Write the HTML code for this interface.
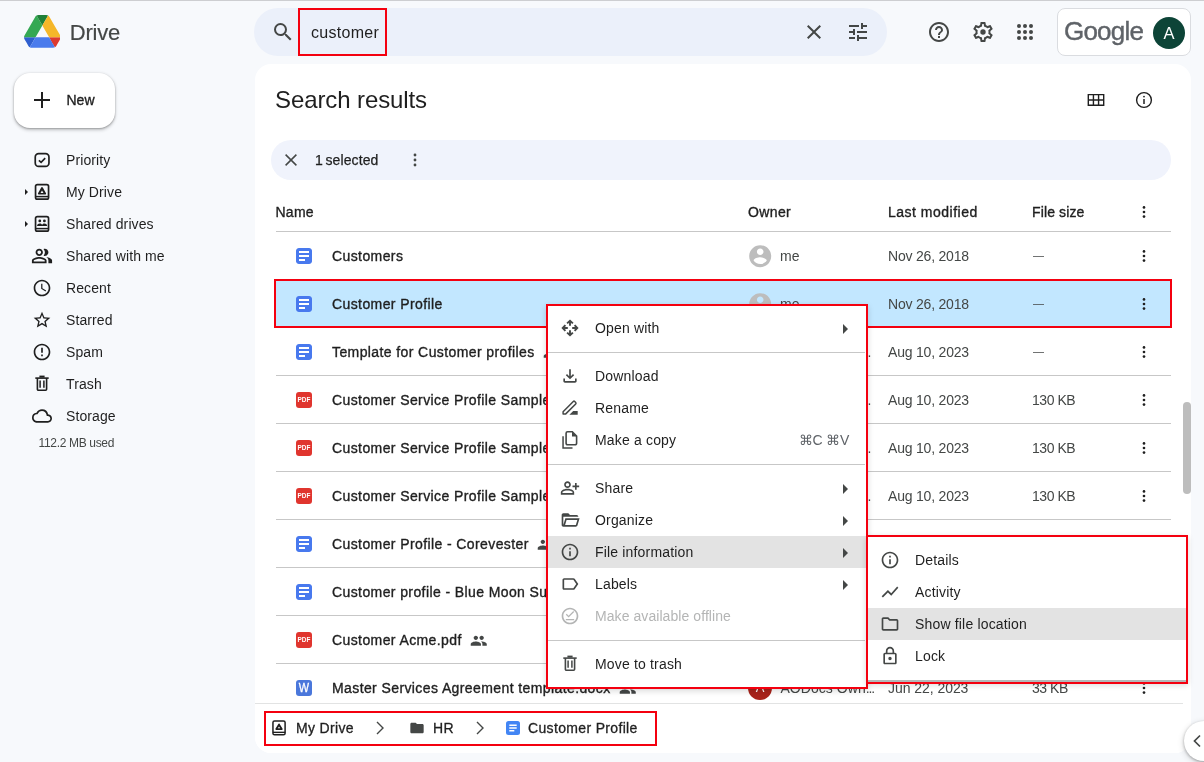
<!DOCTYPE html>
<html lang="en">
<head>
<meta charset="utf-8">
<title>Search results - Google Drive</title>
<style>
*{box-sizing:border-box;margin:0;padding:0}
html,body{width:1204px;height:762px;overflow:hidden}
body{background:#f7f9fc;font-family:"Liberation Sans",Arial,sans-serif;color:#1f1f1f;position:relative;-webkit-font-smoothing:antialiased}
#wrap{position:absolute;left:0;top:0;width:1204px;height:762px;overflow:hidden;will-change:transform}
.abs{position:absolute}
svg{display:block}
.ic{position:absolute;width:24px;height:24px;fill:#444746}
.t{position:absolute;white-space:nowrap;line-height:20px;height:20px}
#topline{left:0;top:0;width:1204px;height:1px;background:#cdced1}
/* header */
#drive{left:69.700px;top:20px;font-size:22px;line-height:26px;height:26px;color:#444746;letter-spacing:-0.2px;-webkit-text-stroke:0.2px #444746}
#search{left:254px;top:8px;width:633px;height:48px;border-radius:24px;background:#ebf0fa}
#q{left:311px;top:23px;font-size:16px;color:#1f1f1f;letter-spacing:0.3px}
.red{position:absolute;border:2px solid #f4000f}
#gbox{left:1057px;top:8px;width:134px;height:47.500px;border-radius:8px;background:#fff;border:1px solid #dadce0}
#glogo{left:1064px;top:14px;font-size:26px;line-height:34px;height:34px;color:#5f6368;letter-spacing:-0.8px;-webkit-text-stroke:0.4px #5f6368}
#avatar{left:1153px;top:16.500px;width:32px;height:32px;border-radius:16px;background:#0d4437;color:#fff;font-size:16.500px;line-height:32px;text-align:center}
/* sidebar */
#new{left:14px;top:72.500px;width:101px;height:55.500px;border-radius:16px;background:#fff;box-shadow:0 1px 2px rgba(0,0,0,.3),0 1.500px 3px 1px rgba(0,0,0,.12)}
#newt{left:66.500px;top:90px;font-size:14px;-webkit-text-stroke:0.35px #1f1f1f;color:#1f1f1f}
.nav{position:absolute;left:66px;font-size:14px;line-height:20px;color:#1f1f1f;white-space:nowrap;letter-spacing:0.1px}
.nic{position:absolute;left:32px;width:20px;height:20px;fill:#1f1f1f}
.tri{position:absolute;left:24.500px;width:0;height:0;border-left:3.800px solid #1f1f1f;border-top:3px solid transparent;border-bottom:3px solid transparent}
#used{left:38.500px;top:433px;font-size:12px;color:#444746;letter-spacing:-0.33px}
/* main */
#main{left:255px;top:64px;width:936px;height:689px;border-radius:16px;background:#fff}
#title{left:275px;top:84px;font-size:24px;line-height:32px;height:32px;color:#1f1f1f;letter-spacing:-0.1px}
#selbar{left:271px;top:140px;width:900px;height:40px;border-radius:20px;background:#f0f3fc}
.h{font-size:14px;color:#1f1f1f;-webkit-text-stroke:0.35px #1f1f1f}
.line{position:absolute;left:276px;width:895px;height:1px;background:#c7c7c7}
.row{position:absolute;left:276px;width:895px;height:48px}
.nm{position:absolute;left:332px;font-size:14px;-webkit-text-stroke:0.35px #1f1f1f;color:#1f1f1f;white-space:nowrap;line-height:20px;letter-spacing:0.4px}
.c{position:absolute;font-size:14px;color:#444746;white-space:nowrap;line-height:20px}
.dash{font-size:11px;left:1033px !important;margin-top:-1px;letter-spacing:0 !important}
.el{letter-spacing:-1.200px}
.fic{position:absolute;left:296px;width:16px;height:16px;border-radius:3px}

#selrow{left:276px;top:280px;width:895px;height:48px;background:#c2e7ff}
.mv{fill:#1f1f1f;width:20px;height:20px}
.pdf{background:#e0352e;color:#fff;font-size:8px;font-weight:bold;line-height:16px;text-align:center}
.pdf span{display:block;transform:scaleX(.8)}
.word{background:#4a77db;color:#fff;font-size:13px;line-height:15.500px;text-align:center;-webkit-text-stroke:0.3px #fff}
.word span{display:block;transform:scaleX(.84)}
.sh{display:inline-block;width:17.500px;height:17.500px;fill:#444746;vertical-align:-4.200px;margin-left:8.500px}
.oav{position:absolute;left:748px;width:24px;height:24px;border-radius:12px;background:#a8231b;color:#fff;font-size:13px;line-height:24px;text-align:center}
.bc{font-size:14px;color:#1f1f1f;-webkit-text-stroke:0.3px #1f1f1f;letter-spacing:0.34px}
/* menus */
.menu{position:absolute;background:#fff;box-shadow:0 2px 6px 2px rgba(0,0,0,.15),0 1px 2px rgba(0,0,0,.3)}
.mi{position:absolute;left:595px;font-size:14px;color:#1f1f1f;white-space:nowrap;line-height:20px;letter-spacing:0.17px}
.mic{position:absolute;left:560px;width:20px;height:20px;fill:#444746}
.msep{position:absolute;left:548px;width:317px;height:1px;background:#c7c7c7}
.arr{position:absolute;left:843px;width:0;height:0;border-left:5px solid #444746;border-top:5px solid transparent;border-bottom:5px solid transparent}
</style>
</head>
<body>
<div id="wrap">
<div class="abs" id="topline"></div>

<!-- HEADER -->
<svg class="abs" style="left:23.700px;top:15px" width="36.700" height="32.800" viewBox="0 0 87.3 78">
<path d="m6.6 66.85 3.85 6.65c.8 1.4 1.95 2.5 3.3 3.3l13.75-23.8h-27.5c0 1.55.4 3.1 1.2 4.5z" fill="#2f5fcf"/>
<path d="m43.65 25-13.75-23.8c-1.35.8-2.5 1.9-3.3 3.3l-25.4 44a9.06 9.06 0 0 0 -1.2 4.5h27.5z" fill="#34a853"/>
<path d="m73.55 76.800c1.350-.8 2.500-1.900 3.300-3.300l1.600-2.750 7.650-13.250c.8-1.400 1.200-2.950 1.200-4.500h-27.502l5.852 11.500z" fill="#dd3a30"/>
<path d="m43.65 25 13.750-23.800c-1.350-.8-2.900-1.200-4.500-1.200h-18.500c-1.600 0-3.150.45-4.500 1.200z" fill="#1f8038"/>
<path d="m59.800 53h-32.300l-13.750 23.800c1.350.8 2.900 1.200 4.500 1.200h50.800c1.600 0 3.150-.45 4.500-1.200z" fill="#4a7bec"/>
<path d="m73.400 26.500-12.700-22c-.8-1.400-1.950-2.500-3.300-3.300l-13.750 23.800 16.150 28h27.450c0-1.550-.4-3.100-1.200-4.500z" fill="#f5b729"/>
</svg>
<div class="t" id="drive">Drive</div>

<div class="abs" id="search"></div>
<svg class="ic" style="left:271px;top:20px" viewBox="0 0 24 24"><path d="M15.5 14h-.79l-.28-.27A6.471 6.471 0 0 0 16 9.500 6.500 6.500 0 1 0 9.500 16c1.610 0 3.090-.59 4.230-1.570l.27.28v.79l5 4.990L20.490 19l-4.990-5zm-6 0C7.010 14 5 11.990 5 9.500S7.010 5 9.500 5 14 7.010 14 9.500 11.990 14 9.500 14z"/></svg>
<div class="t" id="q">customer</div>
<div class="red" style="left:298px;top:8px;width:89px;height:48px"></div>
<svg class="ic" style="left:802px;top:20px" viewBox="0 0 24 24"><path d="M19 6.410L17.590 5 12 10.590 6.410 5 5 6.410 10.590 12 5 17.590 6.410 19 12 13.410 17.590 19 19 17.590 13.410 12z"/></svg>
<svg class="ic" style="left:846px;top:20px" viewBox="0 0 24 24"><path d="M3 17v2h6v-2H3zM3 5v2h10V5H3zm10 16v-2h8v-2h-8v-2h-2v6h2zM7 9v2H3v2h4v2h2V9H7zm14 4v-2H11v2h10zm-6-4h2V7h4V5h-4V3h-2v6z"/></svg>
<svg class="ic" style="left:927px;top:20px" viewBox="0 0 24 24"><path d="M11 18h2v-2h-2v2zm1-16C6.480 2 2 6.480 2 12s4.480 10 10 10 10-4.480 10-10S17.520 2 12 2zm0 18c-4.410 0-8-3.590-8-8s3.590-8 8-8 8 3.590 8 8-3.590 8-8 8zm0-14c-2.210 0-4 1.790-4 4h2c0-1.100.9-2 2-2s2 .9 2 2c0 2-3 1.750-3 5h2c0-2.250 3-2.500 3-5 0-2.210-1.790-4-4-4z"/></svg>
<svg class="ic" style="left:971px;top:20px" viewBox="0 0 24 24"><path d="M19.430 12.980c.04-.32.07-.64.07-.98 0-.34-.03-.66-.07-.98l2.110-1.650c.19-.15.24-.42.12-.64l-2-3.460a.5.5 0 0 0-.61-.22l-2.490 1c-.52-.4-1.080-.73-1.690-.98l-.38-2.650A.488.488 0 0 0 14 2h-4c-.25 0-.46.18-.49.42l-.38 2.650c-.61.25-1.170.59-1.690.98l-2.490-1a.566.566 0 0 0-.18-.03c-.17 0-.34.09-.43.25l-2 3.460c-.13.22-.07.49.12.64l2.110 1.650c-.04.32-.07.65-.07.98 0 .33.03.66.07.98l-2.110 1.650c-.19.15-.24.42-.12.64l2 3.460a.5.5 0 0 0 .61.22l2.490-1c.52.4 1.080.73 1.690.98l.38 2.650c.03.24.24.42.49.42h4c.25 0 .46-.18.49-.42l.38-2.650c.61-.25 1.170-.59 1.690-.98l2.490 1c.06.02.12.03.18.03.17 0 .34-.09.43-.25l2-3.460c.12-.22.07-.49-.12-.64l-2.110-1.650zm-1.980-1.710c.04.31.05.52.05.73 0 .21-.02.43-.05.73l-.14 1.130.89.7 1.080.84-.7 1.210-1.270-.51-1.040-.42-.9.68c-.43.32-.84.56-1.250.73l-1.060.43-.16 1.130-.2 1.350h-1.400l-.19-1.350-.16-1.130-1.060-.43c-.43-.18-.83-.41-1.230-.71l-.91-.7-1.060.43-1.270.51-.7-1.210 1.080-.84.89-.7-.14-1.130c-.03-.31-.05-.54-.05-.74s.02-.43.05-.73l.14-1.130-.89-.7-1.080-.84.7-1.210 1.270.51 1.040.42.9-.68c.43-.32.84-.56 1.250-.73l1.060-.43.16-1.130.2-1.350h1.390l.19 1.350.16 1.130 1.060.43c.43.18.83.41 1.230.71l.91.7 1.060-.43 1.270-.51.7 1.210-1.070.85-.89.7.14 1.130z"/><circle cx="12" cy="12" r="2.700"/></svg>
<svg class="ic" style="left:1013px;top:20px" viewBox="0 0 24 24"><circle cx="6" cy="6" r="2"/><circle cx="12" cy="6" r="2"/><circle cx="18" cy="6" r="2"/><circle cx="6" cy="12" r="2"/><circle cx="12" cy="12" r="2"/><circle cx="18" cy="12" r="2"/><circle cx="6" cy="18" r="2"/><circle cx="12" cy="18" r="2"/><circle cx="18" cy="18" r="2"/></svg>
<div class="abs" id="gbox"></div>
<div class="t" id="glogo">Google</div>
<div class="abs" id="avatar">A</div>

<!-- SIDEBAR -->
<div class="abs" id="new"></div>
<svg class="abs" style="left:30px;top:88px" width="24" height="24" viewBox="0 0 24 24"><path d="M11 4h2v7h7v2h-7v7h-2v-7H4v-2h7z" fill="#1f1f1f"/></svg>
<div class="t" id="newt">New</div>

<!-- NAV -->
<div class="nav" style="top:150px">Priority</div>
<div class="nav" style="top:182px">My Drive</div>
<div class="nav" style="top:214px">Shared drives</div>
<div class="nav" style="top:246px">Shared with me</div>
<div class="nav" style="top:278px">Recent</div>
<div class="nav" style="top:310px">Starred</div>
<div class="nav" style="top:342px">Spam</div>
<div class="nav" style="top:374px">Trash</div>
<div class="nav" style="top:406px">Storage</div>
<div class="t" id="used">112.2 MB used</div>
<div class="tri" style="top:189px"></div>
<div class="tri" style="top:221px"></div>

<!-- MAIN -->
<div class="abs" id="main"></div>
<div class="t" id="title">Search results</div>
<div class="abs" id="selbar"></div>
<!-- sidebar icons -->
<svg class="nic" style="top:150px" viewBox="0 0 20 20"><rect x="3.250" y="3.650" width="13.700" height="12.700" rx="3.400" fill="none" stroke="#1f1f1f" stroke-width="1.700"/><path d="M6.900 10.300l2.200 2.100 4.100-4.300" fill="none" stroke="#1f1f1f" stroke-width="1.600"/></svg>
<svg class="nic" style="top:182px" viewBox="0 0 20 20"><rect x="3.550" y="2.550" width="13" height="14.550" rx="1.700" fill="none" stroke="#1f1f1f" stroke-width="1.700"/><path d="M3.550 14.600h13" stroke="#1f1f1f" stroke-width="1.500"/><path d="M10 6l3.200 5.600H6.800z" fill="#1f1f1f" stroke="#1f1f1f" stroke-width="1.800" stroke-linejoin="round"/><path d="M10 8.400l1.500 2.500h-3z" fill="#f7f9fc"/></svg>
<svg class="nic" style="top:214px" viewBox="0 0 20 20"><rect x="3.550" y="2.550" width="13" height="14.550" rx="1.700" fill="none" stroke="#1f1f1f" stroke-width="1.700"/><path d="M3.550 14.600h13" stroke="#1f1f1f" stroke-width="1.500"/><circle cx="7.800" cy="6.900" r="1.400"/><circle cx="12.400" cy="6.900" r="1.400"/><path d="M5 11.900c0-1.700 1.600-2.500 2.800-2.500s2.300.6 2.300 1.800c0-1.200 1.100-1.800 2.300-1.800s2.800.8 2.800 2.500z"/></svg>
<svg class="nic" style="top:246px;left:31px;width:22px;height:22px;margin-top:-1px" viewBox="0 0 24 24"><path d="M16.670 13.130C18.040 14.060 19 15.320 19 17v3h4v-3c0-2.180-3.570-3.470-6.330-3.870zM15 12c2.210 0 4-1.790 4-4s-1.790-4-4-4c-.47 0-.91.1-1.330.24a5.980 5.980 0 0 1 0 7.520c.42.14.86.24 1.330.24zM9 12c2.210 0 4-1.790 4-4s-1.790-4-4-4-4 1.790-4 4 1.790 4 4 4zm0-6c1.100 0 2 .9 2 2s-.9 2-2 2-2-.9-2-2 .9-2 2-2zm0 7c-2.670 0-8 1.340-8 4v3h16v-3c0-2.660-5.330-4-8-4zm6 5H3v-.99C3.200 16.290 6.300 15 9 15s5.800 1.290 6 2v1z"/></svg>
<svg class="nic" style="top:278px" viewBox="0 0 24 24"><path d="M11.990 2C6.470 2 2 6.480 2 12s4.470 10 9.990 10C17.520 22 22 17.520 22 12S17.520 2 11.990 2zM12 20c-4.420 0-8-3.580-8-8s3.580-8 8-8 8 3.580 8 8-3.580 8-8 8zm.5-13H11v6l5.250 3.150.75-1.230-4.500-2.670z"/></svg>
<svg class="nic" style="top:310px" viewBox="0 0 24 24"><path d="M22 9.240l-7.190-.62L12 2 9.190 8.630 2 9.240l5.460 4.730L5.820 21 12 17.270 18.180 21l-1.630-7.030L22 9.240zM12 15.400l-3.760 2.270 1-4.280-3.320-2.880 4.380-.38L12 6.100l1.710 4.040 4.380.38-3.320 2.880 1 4.280L12 15.400z"/></svg>
<svg class="nic" style="top:342px" viewBox="0 0 24 24"><path d="M11 15h2v2h-2zm0-8h2v6h-2zm.99-5C6.470 2 2 6.480 2 12s4.470 10 9.990 10C17.520 22 22 17.520 22 12S17.520 2 11.990 2zM12 20c-4.420 0-8-3.580-8-8s3.580-8 8-8 8 3.580 8 8-3.580 8-8 8z"/></svg>
<svg class="nic" style="top:374px;color:#1f1f1f" viewBox="0 0 20 20"><path d="M3.300 4.100h13.400" fill="none" stroke="currentColor" stroke-width="1.600"/><path d="M7.400 1.600h5.200v2H7.400z"/><path d="M5.400 4.100V15.200a1 1 0 0 0 1 1h7.200a1 1 0 0 0 1-1V4.100" fill="none" stroke="currentColor" stroke-width="1.600"/><path d="M8.100 6.500v7.300M11.900 6.500v7.300" fill="none" stroke="currentColor" stroke-width="1.500"/></svg>
<svg class="nic" style="top:406px;left:32px;width:20px;height:20px" viewBox="0 0 24 24"><path d="M19.350 10.040A7.490 7.490 0 0 0 12 4C9.110 4 6.600 5.640 5.350 8.040A5.994 5.994 0 0 0 0 14c0 3.310 2.690 6 6 6h13c2.760 0 5-2.240 5-5 0-2.640-2.050-4.780-4.650-4.960zM19 18H6c-2.210 0-4-1.790-4-4 0-2.050 1.530-3.760 3.560-3.970l1.070-.11.5-.95A5.469 5.469 0 0 1 12 6c2.620 0 4.880 1.860 5.390 4.430l.3 1.500 1.530.11A2.980 2.980 0 0 1 22 15c0 1.650-1.350 3-3 3z"/></svg>

<!-- selection bar content -->
<svg class="abs" style="left:281px;top:150px" width="20" height="20" viewBox="0 0 20 20"><path d="M4.600 4.600l10.800 10.800M15.400 4.600L4.600 15.400" fill="none" stroke="#444746" stroke-width="1.500"/></svg>
<div class="t" style="left:315px;top:150px;font-size:14px;color:#1f1f1f;-webkit-text-stroke:0.25px #1f1f1f;letter-spacing:0.12px;word-spacing:-1.500px">1 selected</div>
<svg class="abs" style="left:405px;top:150px" width="20" height="20" viewBox="0 0 24 24"><circle cx="12" cy="6" r="1.700" fill="#444746"/><circle cx="12" cy="12" r="1.700" fill="#444746"/><circle cx="12" cy="18" r="1.700" fill="#444746"/></svg>

<!-- title icons -->
<svg class="abs" style="left:1086px;top:90px" width="20" height="20" viewBox="0 0 20 20"><path d="M2.300 4.600h15.400v10.700H2.300zM7.430 4.600v10.700M12.570 4.600v10.700M2.300 9.950h15.400" fill="none" stroke="#1f1f1f" stroke-width="1.400"/></svg>
<svg class="abs" style="left:1134px;top:90px" width="20" height="20" viewBox="0 0 20 20"><circle cx="10" cy="10" r="7.400" fill="none" stroke="#1f1f1f" stroke-width="1.400"/><path d="M10 9v5" stroke="#1f1f1f" stroke-width="1.500"/><circle cx="10" cy="6.600" r="0.900" fill="#1f1f1f"/></svg>
<!--ROWS-START-->
<!-- TABLE -->
<div class="t h" style="left:275.500px;top:202px;letter-spacing:0.25px">Name</div>
<div class="t h" style="left:748px;top:202px;letter-spacing:0.37px">Owner</div>
<div class="t h" style="left:888px;top:202px;letter-spacing:0.5px">Last modified</div>
<div class="t h" style="left:1032px;top:202px;letter-spacing:0.12px">File size</div>
<svg class="ic mv" style="left:1134px;top:202px" viewBox="0 0 24 24"><circle cx="12" cy="6.500" r="1.600"/><circle cx="12" cy="12" r="1.600"/><circle cx="12" cy="17.500" r="1.600"/></svg>
<div class="line" style="top:231px"></div>
<div class="abs" id="selrow"></div>
<!-- row 0 -->
<svg class="fic" style="top:248px" viewBox="0 0 16 16"><rect width="16" height="16" rx="2" fill="#4879ee"/><path d="M3 3h10v2H3zM3 7h10v2H3zM3 11h6v2H3z" fill="#fff"/></svg>
<div class="nm" style="top:246px">Customers<svg class="sh" viewBox="0 0 24 24" style="visibility:hidden"><path d="M16 11c1.660 0 2.990-1.340 2.990-3S17.660 5 16 5c-1.660 0-3 1.340-3 3s1.340 3 3 3zm-8 0c1.660 0 2.990-1.340 2.990-3S9.660 5 8 5C6.340 5 5 6.340 5 8s1.340 3 3 3zm0 2c-2.330 0-7 1.170-7 3.500V19h14v-2.500c0-2.330-4.670-3.500-7-3.500zm8 0c-.29 0-.62.02-.97.05 1.160.84 1.970 1.970 1.970 3.450V19h6v-2.500c0-2.330-4.670-3.500-7-3.500z"/></svg></div>
<svg class="abs" style="left:746.800px;top:242.8px" width="26.400" height="26.400" viewBox="0 0 24 24"><path fill="#bdbdbd" d="M12 2C6.480 2 2 6.480 2 12s4.480 10 10 10 10-4.480 10-10S17.520 2 12 2zm0 3c1.660 0 3 1.340 3 3s-1.340 3-3 3-3-1.340-3-3 1.340-3 3-3zm0 14.200c-2.500 0-4.710-1.280-6-3.220.03-1.990 4-3.080 6-3.080 1.990 0 5.970 1.090 6 3.080-1.290 1.940-3.500 3.220-6 3.220z"/></svg>
<div class="c" style="left:780px;top:246px">me</div>
<div class="c" style="left:888px;top:246px;letter-spacing:-0.2px">Nov 26, 2018</div>
<div class="c dash" style="left:1032px;top:246px;letter-spacing:-0.45px">—</div>
<svg class="ic mv" style="left:1134px;top:246px" viewBox="0 0 24 24"><circle cx="12" cy="6.500" r="1.600"/><circle cx="12" cy="12" r="1.600"/><circle cx="12" cy="17.500" r="1.600"/></svg>
<div class="line" style="top:279px"></div>
<!-- row 1 -->
<svg class="fic" style="top:296px" viewBox="0 0 16 16"><rect width="16" height="16" rx="2" fill="#4879ee"/><path d="M3 3h10v2H3zM3 7h10v2H3zM3 11h6v2H3z" fill="#fff"/></svg>
<div class="nm" style="top:294px">Customer Profile<svg class="sh" viewBox="0 0 24 24" style="visibility:hidden"><path d="M16 11c1.660 0 2.990-1.340 2.990-3S17.660 5 16 5c-1.660 0-3 1.340-3 3s1.340 3 3 3zm-8 0c1.660 0 2.990-1.340 2.990-3S9.660 5 8 5C6.340 5 5 6.340 5 8s1.340 3 3 3zm0 2c-2.330 0-7 1.170-7 3.500V19h14v-2.500c0-2.330-4.670-3.500-7-3.500zm8 0c-.29 0-.62.02-.97.05 1.160.84 1.970 1.970 1.970 3.450V19h6v-2.500c0-2.330-4.670-3.500-7-3.500z"/></svg></div>
<svg class="abs" style="left:746.800px;top:290.8px" width="26.400" height="26.400" viewBox="0 0 24 24"><path fill="#bdbdbd" d="M12 2C6.480 2 2 6.480 2 12s4.480 10 10 10 10-4.480 10-10S17.520 2 12 2zm0 3c1.660 0 3 1.340 3 3s-1.340 3-3 3-3-1.340-3-3 1.340-3 3-3zm0 14.200c-2.500 0-4.710-1.280-6-3.220.03-1.990 4-3.080 6-3.080 1.990 0 5.970 1.090 6 3.080-1.290 1.940-3.500 3.220-6 3.220z"/></svg>
<div class="c" style="left:780px;top:294px">me</div>
<div class="c" style="left:888px;top:294px;letter-spacing:-0.2px">Nov 26, 2018</div>
<div class="c dash" style="left:1032px;top:294px;letter-spacing:-0.45px">—</div>
<svg class="ic mv" style="left:1134px;top:294px" viewBox="0 0 24 24"><circle cx="12" cy="6.500" r="1.600"/><circle cx="12" cy="12" r="1.600"/><circle cx="12" cy="17.500" r="1.600"/></svg>
<!-- row 2 -->
<svg class="fic" style="top:344px" viewBox="0 0 16 16"><rect width="16" height="16" rx="2" fill="#4879ee"/><path d="M3 3h10v2H3zM3 7h10v2H3zM3 11h6v2H3z" fill="#fff"/></svg>
<div class="nm" style="top:342px">Template for Customer profiles<svg class="sh" viewBox="0 0 24 24" style="visibility:visible"><path d="M16 11c1.660 0 2.990-1.340 2.990-3S17.660 5 16 5c-1.660 0-3 1.340-3 3s1.340 3 3 3zm-8 0c1.660 0 2.990-1.340 2.990-3S9.660 5 8 5C6.340 5 5 6.340 5 8s1.340 3 3 3zm0 2c-2.330 0-7 1.170-7 3.500V19h14v-2.500c0-2.330-4.670-3.500-7-3.500zm8 0c-.29 0-.62.02-.97.05 1.160.84 1.970 1.970 1.970 3.450V19h6v-2.500c0-2.330-4.670-3.500-7-3.500z"/></svg></div>
<div class="oav" style="top:340px">A</div>
<div class="c" style="left:776.6px;top:342px;letter-spacing:0.06px">AODocs Own<span class="el">...</span></div>
<div class="c" style="left:888px;top:342px;letter-spacing:-0.2px">Aug 10, 2023</div>
<div class="c dash" style="left:1032px;top:342px;letter-spacing:-0.45px">—</div>
<svg class="ic mv" style="left:1134px;top:342px" viewBox="0 0 24 24"><circle cx="12" cy="6.500" r="1.600"/><circle cx="12" cy="12" r="1.600"/><circle cx="12" cy="17.500" r="1.600"/></svg>
<div class="line" style="top:375px"></div>
<!-- row 3 -->
<div class="fic pdf" style="top:392px"><span>PDF</span></div>
<div class="nm" style="top:390px">Customer Service Profile Sample.pdf<svg class="sh" viewBox="0 0 24 24" style="visibility:hidden"><path d="M16 11c1.660 0 2.990-1.340 2.990-3S17.660 5 16 5c-1.660 0-3 1.340-3 3s1.340 3 3 3zm-8 0c1.660 0 2.990-1.340 2.990-3S9.660 5 8 5C6.340 5 5 6.340 5 8s1.340 3 3 3zm0 2c-2.330 0-7 1.170-7 3.500V19h14v-2.500c0-2.330-4.670-3.500-7-3.500zm8 0c-.29 0-.62.02-.97.05 1.160.84 1.970 1.970 1.970 3.450V19h6v-2.500c0-2.330-4.670-3.500-7-3.500z"/></svg></div>
<div class="oav" style="top:388px">A</div>
<div class="c" style="left:776.6px;top:390px;letter-spacing:0.06px">AODocs Own<span class="el">...</span></div>
<div class="c" style="left:888px;top:390px;letter-spacing:-0.2px">Aug 10, 2023</div>
<div class="c" style="left:1032px;top:390px;letter-spacing:-0.45px">130 KB</div>
<svg class="ic mv" style="left:1134px;top:390px" viewBox="0 0 24 24"><circle cx="12" cy="6.500" r="1.600"/><circle cx="12" cy="12" r="1.600"/><circle cx="12" cy="17.500" r="1.600"/></svg>
<div class="line" style="top:423px"></div>
<!-- row 4 -->
<div class="fic pdf" style="top:440px"><span>PDF</span></div>
<div class="nm" style="top:438px">Customer Service Profile Sample.pdf<svg class="sh" viewBox="0 0 24 24" style="visibility:hidden"><path d="M16 11c1.660 0 2.990-1.340 2.990-3S17.660 5 16 5c-1.660 0-3 1.340-3 3s1.340 3 3 3zm-8 0c1.660 0 2.990-1.340 2.990-3S9.660 5 8 5C6.340 5 5 6.340 5 8s1.340 3 3 3zm0 2c-2.330 0-7 1.170-7 3.500V19h14v-2.500c0-2.330-4.670-3.500-7-3.500zm8 0c-.29 0-.62.02-.97.05 1.160.84 1.970 1.970 1.970 3.450V19h6v-2.500c0-2.330-4.670-3.500-7-3.500z"/></svg></div>
<div class="oav" style="top:436px">A</div>
<div class="c" style="left:776.6px;top:438px;letter-spacing:0.06px">AODocs Own<span class="el">...</span></div>
<div class="c" style="left:888px;top:438px;letter-spacing:-0.2px">Aug 10, 2023</div>
<div class="c" style="left:1032px;top:438px;letter-spacing:-0.45px">130 KB</div>
<svg class="ic mv" style="left:1134px;top:438px" viewBox="0 0 24 24"><circle cx="12" cy="6.500" r="1.600"/><circle cx="12" cy="12" r="1.600"/><circle cx="12" cy="17.500" r="1.600"/></svg>
<div class="line" style="top:471px"></div>
<!-- row 5 -->
<div class="fic pdf" style="top:488px"><span>PDF</span></div>
<div class="nm" style="top:486px">Customer Service Profile Sample.pdf<svg class="sh" viewBox="0 0 24 24" style="visibility:hidden"><path d="M16 11c1.660 0 2.990-1.340 2.990-3S17.660 5 16 5c-1.660 0-3 1.340-3 3s1.340 3 3 3zm-8 0c1.660 0 2.990-1.340 2.990-3S9.660 5 8 5C6.340 5 5 6.340 5 8s1.340 3 3 3zm0 2c-2.330 0-7 1.170-7 3.500V19h14v-2.500c0-2.330-4.670-3.500-7-3.500zm8 0c-.29 0-.62.02-.97.05 1.160.84 1.970 1.970 1.970 3.450V19h6v-2.500c0-2.330-4.670-3.500-7-3.500z"/></svg></div>
<div class="oav" style="top:484px">A</div>
<div class="c" style="left:776.6px;top:486px;letter-spacing:0.06px">AODocs Own<span class="el">...</span></div>
<div class="c" style="left:888px;top:486px;letter-spacing:-0.2px">Aug 10, 2023</div>
<div class="c" style="left:1032px;top:486px;letter-spacing:-0.45px">130 KB</div>
<svg class="ic mv" style="left:1134px;top:486px" viewBox="0 0 24 24"><circle cx="12" cy="6.500" r="1.600"/><circle cx="12" cy="12" r="1.600"/><circle cx="12" cy="17.500" r="1.600"/></svg>
<div class="line" style="top:519px"></div>
<!-- row 6 -->
<svg class="fic" style="top:536px" viewBox="0 0 16 16"><rect width="16" height="16" rx="2" fill="#4879ee"/><path d="M3 3h10v2H3zM3 7h10v2H3zM3 11h6v2H3z" fill="#fff"/></svg>
<div class="nm" style="top:534px">Customer Profile - Corevester<svg class="sh" viewBox="0 0 24 24" style="visibility:visible"><path d="M16 11c1.660 0 2.990-1.340 2.990-3S17.660 5 16 5c-1.660 0-3 1.340-3 3s1.340 3 3 3zm-8 0c1.660 0 2.990-1.340 2.990-3S9.660 5 8 5C6.340 5 5 6.340 5 8s1.340 3 3 3zm0 2c-2.330 0-7 1.170-7 3.500V19h14v-2.500c0-2.330-4.670-3.500-7-3.500zm8 0c-.29 0-.62.02-.97.05 1.160.84 1.970 1.970 1.970 3.450V19h6v-2.500c0-2.330-4.670-3.500-7-3.500z"/></svg></div>
<svg class="abs" style="left:746.800px;top:530.8px" width="26.400" height="26.400" viewBox="0 0 24 24"><path fill="#bdbdbd" d="M12 2C6.480 2 2 6.480 2 12s4.480 10 10 10 10-4.480 10-10S17.520 2 12 2zm0 3c1.660 0 3 1.340 3 3s-1.340 3-3 3-3-1.340-3-3 1.340-3 3-3zm0 14.200c-2.500 0-4.710-1.280-6-3.220.03-1.990 4-3.080 6-3.080 1.990 0 5.970 1.090 6 3.080-1.290 1.940-3.500 3.220-6 3.220z"/></svg>
<div class="c" style="left:780px;top:534px">me</div>
<div class="c" style="left:888px;top:534px;letter-spacing:-0.2px">Aug 9, 2023</div>
<div class="c dash" style="left:1032px;top:534px;letter-spacing:-0.45px">—</div>
<svg class="ic mv" style="left:1134px;top:534px" viewBox="0 0 24 24"><circle cx="12" cy="6.500" r="1.600"/><circle cx="12" cy="12" r="1.600"/><circle cx="12" cy="17.500" r="1.600"/></svg>
<div class="line" style="top:567px"></div>
<!-- row 7 -->
<svg class="fic" style="top:584px" viewBox="0 0 16 16"><rect width="16" height="16" rx="2" fill="#4879ee"/><path d="M3 3h10v2H3zM3 7h10v2H3zM3 11h6v2H3z" fill="#fff"/></svg>
<div class="nm" style="top:582px">Customer profile - Blue Moon Supplies<svg class="sh" viewBox="0 0 24 24" style="visibility:visible"><path d="M16 11c1.660 0 2.990-1.340 2.990-3S17.660 5 16 5c-1.660 0-3 1.340-3 3s1.340 3 3 3zm-8 0c1.660 0 2.990-1.340 2.990-3S9.660 5 8 5C6.340 5 5 6.340 5 8s1.340 3 3 3zm0 2c-2.330 0-7 1.170-7 3.500V19h14v-2.500c0-2.330-4.670-3.500-7-3.500zm8 0c-.29 0-.62.02-.97.05 1.160.84 1.970 1.970 1.970 3.450V19h6v-2.500c0-2.330-4.670-3.500-7-3.500z"/></svg></div>
<svg class="abs" style="left:746.800px;top:578.8px" width="26.400" height="26.400" viewBox="0 0 24 24"><path fill="#bdbdbd" d="M12 2C6.480 2 2 6.480 2 12s4.480 10 10 10 10-4.480 10-10S17.520 2 12 2zm0 3c1.660 0 3 1.340 3 3s-1.340 3-3 3-3-1.340-3-3 1.340-3 3-3zm0 14.200c-2.500 0-4.710-1.280-6-3.220.03-1.990 4-3.080 6-3.080 1.990 0 5.970 1.090 6 3.080-1.290 1.940-3.500 3.220-6 3.220z"/></svg>
<div class="c" style="left:780px;top:582px">me</div>
<div class="c" style="left:888px;top:582px;letter-spacing:-0.2px">Aug 9, 2023</div>
<div class="c dash" style="left:1032px;top:582px;letter-spacing:-0.45px">—</div>
<svg class="ic mv" style="left:1134px;top:582px" viewBox="0 0 24 24"><circle cx="12" cy="6.500" r="1.600"/><circle cx="12" cy="12" r="1.600"/><circle cx="12" cy="17.500" r="1.600"/></svg>
<div class="line" style="top:615px"></div>
<!-- row 8 -->
<div class="fic pdf" style="top:632px"><span>PDF</span></div>
<div class="nm" style="top:630px">Customer Acme.pdf<svg class="sh" viewBox="0 0 24 24" style="visibility:visible"><path d="M16 11c1.660 0 2.990-1.340 2.990-3S17.660 5 16 5c-1.660 0-3 1.340-3 3s1.340 3 3 3zm-8 0c1.660 0 2.990-1.340 2.990-3S9.660 5 8 5C6.340 5 5 6.340 5 8s1.340 3 3 3zm0 2c-2.330 0-7 1.170-7 3.500V19h14v-2.500c0-2.330-4.670-3.500-7-3.500zm8 0c-.29 0-.62.02-.97.05 1.160.84 1.970 1.970 1.970 3.450V19h6v-2.500c0-2.330-4.670-3.500-7-3.500z"/></svg></div>
<svg class="abs" style="left:746.800px;top:626.8px" width="26.400" height="26.400" viewBox="0 0 24 24"><path fill="#bdbdbd" d="M12 2C6.480 2 2 6.480 2 12s4.480 10 10 10 10-4.480 10-10S17.520 2 12 2zm0 3c1.660 0 3 1.340 3 3s-1.340 3-3 3-3-1.340-3-3 1.340-3 3-3zm0 14.200c-2.500 0-4.710-1.280-6-3.220.03-1.990 4-3.080 6-3.080 1.990 0 5.970 1.090 6 3.080-1.290 1.940-3.500 3.220-6 3.220z"/></svg>
<div class="c" style="left:780px;top:630px">me</div>
<div class="c" style="left:888px;top:630px;letter-spacing:-0.2px">Jul 5, 2023</div>
<div class="c" style="left:1032px;top:630px;letter-spacing:-0.45px">97 KB</div>
<svg class="ic mv" style="left:1134px;top:630px" viewBox="0 0 24 24"><circle cx="12" cy="6.500" r="1.600"/><circle cx="12" cy="12" r="1.600"/><circle cx="12" cy="17.500" r="1.600"/></svg>
<div class="line" style="top:663px"></div>
<!-- row 9 -->
<div class="fic word" style="top:680px"><span>W</span></div>
<div class="nm" style="top:678px">Master Services Agreement template.docx<svg class="sh" viewBox="0 0 24 24" style="visibility:visible"><path d="M16 11c1.660 0 2.990-1.340 2.990-3S17.660 5 16 5c-1.660 0-3 1.340-3 3s1.340 3 3 3zm-8 0c1.660 0 2.990-1.340 2.990-3S9.660 5 8 5C6.340 5 5 6.340 5 8s1.340 3 3 3zm0 2c-2.330 0-7 1.170-7 3.500V19h14v-2.500c0-2.330-4.670-3.500-7-3.500zm8 0c-.29 0-.62.02-.97.05 1.160.84 1.970 1.970 1.970 3.450V19h6v-2.500c0-2.330-4.670-3.500-7-3.500z"/></svg></div>
<div class="oav" style="top:676px">A</div>
<div class="c" style="left:780.4px;top:678px;letter-spacing:0.06px">AODocs Own<span class="el">...</span></div>
<div class="c" style="left:888px;top:678px;letter-spacing:-0.05px">Jun 22, 2023</div>
<div class="c" style="left:1032px;top:678px;letter-spacing:-0.45px">33 KB</div>
<svg class="ic mv" style="left:1134px;top:678px" viewBox="0 0 24 24"><circle cx="12" cy="6.500" r="1.600"/><circle cx="12" cy="12" r="1.600"/><circle cx="12" cy="17.500" r="1.600"/></svg>
<div class="line" style="top:711px"></div>
<!--ROWS-END-->
<!--MENUS-START-->
<!-- row selection red box -->
<div class="red" style="left:274px;top:279px;width:898px;height:49px"></div>

<!-- BOTTOM BAR -->
<div class="abs" style="left:255px;top:704px;width:936px;height:49px;background:#fff;border-radius:0 0 16px 16px"></div>
<div class="abs" style="left:255px;top:703px;width:928px;height:1px;background:#e2e3e3"></div>
<svg class="abs" style="left:271px;top:720px" width="16" height="16" viewBox="0 0 16 16"><rect x="1.950" y="0.950" width="12.150" height="13.800" rx="1.600" fill="none" stroke="#1f1f1f" stroke-width="1.500"/><path d="M1.950 12.350h12.150" stroke="#1f1f1f" stroke-width="1.400"/><path d="M8 4.300l2.900 4.800H5.100z" fill="#1f1f1f" stroke="#1f1f1f" stroke-width="1.600" stroke-linejoin="round"/><path d="M8 6.400l1.200 1.900H6.800z" fill="#fff"/></svg>
<div class="t bc" style="left:296px;top:718px">My Drive</div>
<svg class="abs" style="left:374px;top:720px" width="12" height="16" viewBox="0 0 12 16"><path d="M3 2l6 6-6 6" fill="none" stroke="#444746" stroke-width="1.400"/></svg>
<svg class="abs" style="left:409px;top:720px" width="16" height="16" viewBox="0 0 24 24"><path d="M10 4H4c-1.100 0-1.990.9-1.990 2L2 18c0 1.100.9 2 2 2h16c1.100 0 2-.9 2-2V8c0-1.100-.9-2-2-2h-8l-2-2z" fill="#444746"/></svg>
<div class="t bc" style="left:433px;top:718px">HR</div>
<svg class="abs" style="left:474px;top:720px" width="12" height="16" viewBox="0 0 12 16"><path d="M3 2l6 6-6 6" fill="none" stroke="#444746" stroke-width="1.400"/></svg>
<svg class="abs" style="left:505px;top:720px" width="16" height="16" viewBox="0 0 16 16"><rect x="1" y="1" width="14" height="14" rx="2.500" fill="#4285f4"/><path d="M4.300 4.500h7.400v1.400H4.300zM4.300 7.300h7.400v1.400H4.300zM4.300 10.100h5v1.400h-5z" fill="#fff"/></svg>
<div class="t bc" style="left:528px;top:718px">Customer Profile</div>
<div class="red" style="left:264px;top:711px;width:393px;height:35px"></div>

<!-- scrollbar + side toggle -->
<div class="abs" style="left:1183px;top:402px;width:8px;height:92px;border-radius:4px;background:#bdbdbd"></div>
<div class="abs" style="left:1184px;top:721px;width:40px;height:40px;border-radius:20px;background:#fff;box-shadow:0 1px 3px rgba(0,0,0,.3),0 2px 6px 1px rgba(0,0,0,.12)"></div>
<svg class="abs" style="left:1191px;top:733px" width="12" height="16" viewBox="0 0 12 16"><path d="M9 2.500L3.500 8 9 13.500" fill="none" stroke="#444746" stroke-width="1.700"/></svg>

<!-- CONTEXT MENU -->
<div class="menu" style="left:548px;top:306px;width:318px;height:381px"></div>
<div class="abs" style="left:548px;top:536px;width:318px;height:32px;background:#e3e3e3"></div>
<div class="msep" style="top:352px"></div>
<div class="msep" style="top:464px"></div>
<div class="msep" style="top:640px"></div>
<div class="mi" style="top:318px">Open with</div>
<div class="mi" style="top:366px">Download</div>
<div class="mi" style="top:398px">Rename</div>
<div class="mi" style="top:430px">Make a copy</div>
<div class="mi" style="top:478px">Share</div>
<div class="mi" style="top:510px">Organize</div>
<div class="mi" style="top:542px">File information</div>
<div class="mi" style="top:574px">Labels</div>
<div class="mi" style="top:606px;color:#b4b5b5;letter-spacing:0.07px">Make available offline</div>
<div class="mi" style="top:654px">Move to trash</div>
<div class="mi sc" style="top:430px;left:798.500px;color:#5f6368;letter-spacing:-0.1px">⌘C ⌘V</div>
<div class="arr" style="top:323.8px"></div>
<div class="arr" style="top:483.8px"></div>
<div class="arr" style="top:515.8px"></div>
<div class="arr" style="top:547.8px"></div>
<div class="arr" style="top:579.8px"></div>
<!-- menu icons -->
<svg class="mic" style="top:318px" viewBox="0 0 20 20"><path d="M7.100 5.400L10 2.700l2.900 2.700M10 3.200v4.600M7.100 14.600L10 17.300l2.900-2.700M10 16.800v-4.600M5.400 7.100L2.700 10l2.700 2.900M3.200 10h4.600M14.600 7.100L17.300 10l-2.700 2.900M16.800 10h-4.600" fill="none" stroke="#444746" stroke-width="1.900"/></svg>
<svg class="mic" style="top:366px" viewBox="0 0 24 24"><path d="M18 15v3H6v-3H4v3c0 1.100.9 2 2 2h12c1.100 0 2-.9 2-2v-3h-2zm-1-4l-1.410-1.410L13 12.170V4h-2v8.170L8.410 9.590 7 11l5 5 5-5z"/></svg>
<svg class="mic" style="top:398px" viewBox="0 0 20 20"><path d="M3.100 16V13.700L13.300 3.500a1 1 0 0 1 1.400 0l1 1a1 1 0 0 1 0 1.400L5.500 16.100z" fill="none" stroke="#444746" stroke-width="1.500" stroke-linejoin="round"/><path d="M13.200 12.900h4.500v3.800H9.400z"/></svg>
<svg class="mic" style="top:430px" viewBox="0 0 20 20"><path d="M7.600 1.800h4.700l4.300 4.400v7.100a1.500 1.500 0 0 1-1.500 1.500H7.600a1.500 1.500 0 0 1-1.500-1.500V3.300a1.500 1.500 0 0 1 1.500-1.500z" fill="none" stroke="#444746" stroke-width="1.600"/><path d="M12 1.800l4.600 4.700H12z"/><path d="M3.050 6.200V17.950H12.500" fill="none" stroke="#444746" stroke-width="1.500"/></svg>
<svg class="mic" style="top:478px" viewBox="0 0 24 24"><path d="M20 9V6h-2v3h-3v2h3v3h2v-3h3V9h-3zM9 12c2.210 0 4-1.790 4-4s-1.790-4-4-4-4 1.790-4 4 1.790 4 4 4zm0-6c1.100 0 2 .9 2 2s-.9 2-2 2-2-.9-2-2 .9-2 2-2zm6.390 8.560C13.710 13.700 11.530 13 9 13s-4.710.7-6.390 1.560A2.970 2.970 0 0 0 1 17.220V20h16v-2.780c0-1.120-.61-2.150-1.610-2.660zM15 18H3v-.78c0-.38.2-.72.52-.88C4.710 15.730 6.630 15 9 15c2.370 0 4.290.73 5.480 1.340.32.16.52.5.52.880V18z"/></svg>
<svg class="mic" style="top:510px" viewBox="0 0 24 24"><path d="M4 20c-1.100 0-2-.9-2-2V6c0-1.100.9-2 2-2h6l2 2h8c1.100 0 2 .9 2 2H4v10l2.400-8h17.100l-2.580 8.590c-.25.840-1.030 1.410-1.910 1.410H4zm2.100-2h12.900l1.800-6H7.900l-1.800 6z"/></svg>
<svg class="mic" style="top:542px" viewBox="0 0 24 24"><path d="M11 7h2v2h-2zm0 4h2v6h-2zm1-9C6.480 2 2 6.480 2 12s4.480 10 10 10 10-4.480 10-10S17.520 2 12 2zm0 18c-4.410 0-8-3.590-8-8s3.590-8 8-8 8 3.590 8 8-3.590 8-8 8z"/></svg>
<svg class="mic" style="top:574px" viewBox="0 0 24 24"><path d="M17.630 5.840C17.270 5.330 16.670 5 16 5L5 5.010C3.900 5.010 3 5.900 3 7v10c0 1.100.9 1.990 2 1.990L16 19c.67 0 1.270-.33 1.630-.84L22 12l-4.370-6.160zM16 17H5V7h11l3.550 5L16 17z"/></svg>
<svg class="mic" style="top:606px;fill:#b4b5b5" viewBox="0 0 24 24"><path d="M12 2C6.480 2 2 6.480 2 12s4.480 10 10 10 10-4.480 10-10S17.520 2 12 2zm0 18c-4.410 0-8-3.590-8-8s3.590-8 8-8 8 3.590 8 8-3.590 8-8 8z"/><path d="M7 15.500h10V17H7zM10.300 13.800L7 10.500l1.100-1.100 2.200 2.200 5.600-5.600L17 7.100z"/></svg>
<svg class="mic" style="top:654px;color:#444746" viewBox="0 0 20 20"><path d="M3.300 4.100h13.400" fill="none" stroke="currentColor" stroke-width="1.600"/><path d="M7.400 1.600h5.200v2H7.400z"/><path d="M5.400 4.100V15.200a1 1 0 0 0 1 1h7.200a1 1 0 0 0 1-1V4.100" fill="none" stroke="currentColor" stroke-width="1.600"/><path d="M8.100 6.500v7.300M11.900 6.500v7.300" fill="none" stroke="currentColor" stroke-width="1.500"/></svg>
<div class="red" style="left:546px;top:304px;width:322px;height:385px"></div>

<!-- SUBMENU -->
<div class="menu" style="left:868px;top:537px;width:318px;height:144px"></div>
<div class="abs" style="left:868px;top:608px;width:318px;height:32px;background:#e3e3e3"></div>
<div class="mi" style="left:915px;top:550px">Details</div>
<div class="mi" style="left:915px;top:582px">Activity</div>
<div class="mi" style="left:915px;top:614px">Show file location</div>
<div class="mi" style="left:915px;top:646px">Lock</div>
<svg class="mic" style="left:880px;top:550px" viewBox="0 0 24 24"><path d="M11 7h2v2h-2zm0 4h2v6h-2zm1-9C6.480 2 2 6.480 2 12s4.480 10 10 10 10-4.480 10-10S17.520 2 12 2zm0 18c-4.410 0-8-3.590-8-8s3.590-8 8-8 8 3.590 8 8-3.590 8-8 8z"/></svg>
<svg class="mic" style="left:880px;top:582px" viewBox="0 0 24 24"><path d="M3.500 18.490l6-6.010 4 4L22 6.920l-1.410-1.410-7.090 7.970-4-4L2 16.990z"/></svg>
<svg class="mic" style="left:880px;top:614px" viewBox="0 0 24 24"><path d="M9.170 6l2 2H20v10H4V6h5.170M10 4H4c-1.100 0-1.990.9-1.990 2L2 18c0 1.100.9 2 2 2h16c1.100 0 2-.9 2-2V8c0-1.100-.9-2-2-2h-8l-2-2z"/></svg>
<svg class="mic" style="left:880px;top:646px" viewBox="0 0 24 24"><path d="M18 8h-1V6c0-2.760-2.240-5-5-5S7 3.240 7 6v2H6c-1.100 0-2 .9-2 2v10c0 1.100.9 2 2 2h12c1.100 0 2-.9 2-2V10c0-1.100-.9-2-2-2zM9 6c0-1.660 1.340-3 3-3s3 1.340 3 3v2H9V6zm9 14H6V10h12v10zm-6-3c1.100 0 2-.9 2-2s-.9-2-2-2-2 .9-2 2 .9 2 2 2z"/></svg>
<div class="abs" style="left:868px;top:680.300px;width:318px;height:1.700px;background:#b3b8b8"></div>
<div class="red" style="left:866px;top:535px;width:322px;height:149px"></div>
<!--MENUS-END-->

</div>
</body>
</html>
